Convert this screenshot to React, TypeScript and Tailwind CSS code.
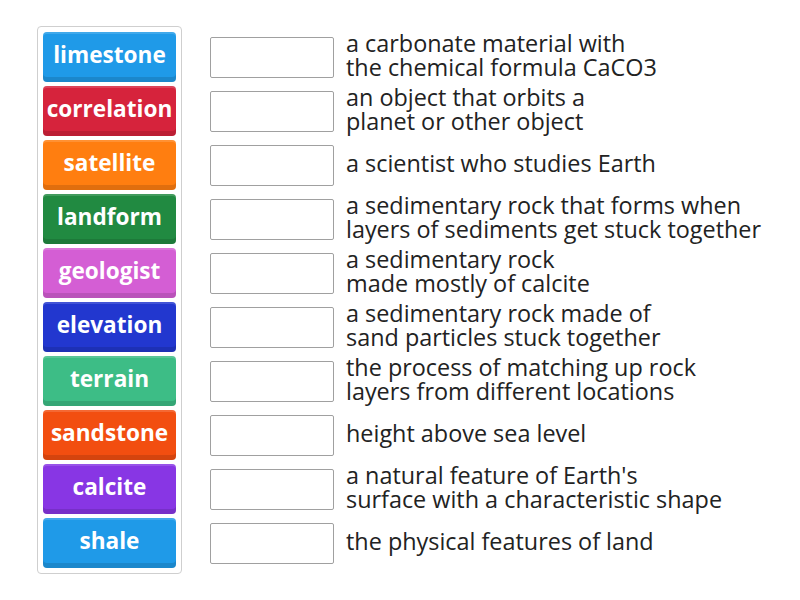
import React from "react";

const tiles: { label: string; bg: string }[] = [
  { label: "limestone", bg: "bg-[#1f9ae8]" },
  { label: "correlation", bg: "bg-[#d6233c]" },
  { label: "satellite", bg: "bg-[#ff7e10]" },
  { label: "landform", bg: "bg-[#218a41]" },
  { label: "geologist", bg: "bg-[#d45ed4]" },
  { label: "elevation", bg: "bg-[#2237cf]" },
  { label: "terrain", bg: "bg-[#3dbd86]" },
  { label: "sandstone", bg: "bg-[#f24e10]" },
  { label: "calcite", bg: "bg-[#8836e4]" },
  { label: "shale", bg: "bg-[#1f9ae8]" },
];

const defs: string[][] = [
  ["a carbonate material with", "the chemical formula CaCO3"],
  ["an object that orbits a", "planet or other object"],
  ["a scientist who studies Earth"],
  ["a sedimentary rock that forms when", "layers of sediments get stuck together"],
  ["a sedimentary rock", "made mostly of calcite"],
  ["a sedimentary rock made of", "sand particles stuck together"],
  ["the process of matching up rock", "layers from different locations"],
  ["height above sea level"],
  ["a natural feature of Earth's", "surface with a characteristic shape"],
  ["the physical features of land"],
];

export default function App() {
  return (
    <div
      className="w-[800px] h-[600px] bg-white flex items-start"
      style={{ fontFamily: '"Open Sans", "Noto Sans", sans-serif' }}
    >
      <div className="ml-[37px] mt-[26px] border border-[#cfcfcf] rounded-[4px] p-[5px] flex flex-col gap-[4px] bg-white">
        {tiles.map((t) => (
          <div
            key={t.label}
            className={`${t.bg} w-[133px] h-[50px] rounded-[4px] flex items-center justify-center text-white font-bold text-[22.6px] leading-none shadow-[inset_0_-5px_0_rgba(0,0,0,0.12),inset_0_2px_0_rgba(255,255,255,0.15)]`}
          >
            <span className="-mt-[4px] whitespace-nowrap">{t.label}</span>
          </div>
        ))}
      </div>
      <div className="ml-[28px] mt-[32px] flex flex-col gap-[4px]">
        {defs.map((d, i) => (
          <div key={i} className="h-[50px] flex items-center">
            <div className="w-[124px] h-[41px] border border-[#a0a0a0] rounded-[2px] bg-white shrink-0" />
            <div className="ml-[12px] text-[23.4px] leading-[24px] text-[#222] whitespace-nowrap -mt-[4px]">
              {d.map((l, j) => (
                <div key={j}>{l}</div>
              ))}
            </div>
          </div>
        ))}
      </div>
    </div>
  );
}
